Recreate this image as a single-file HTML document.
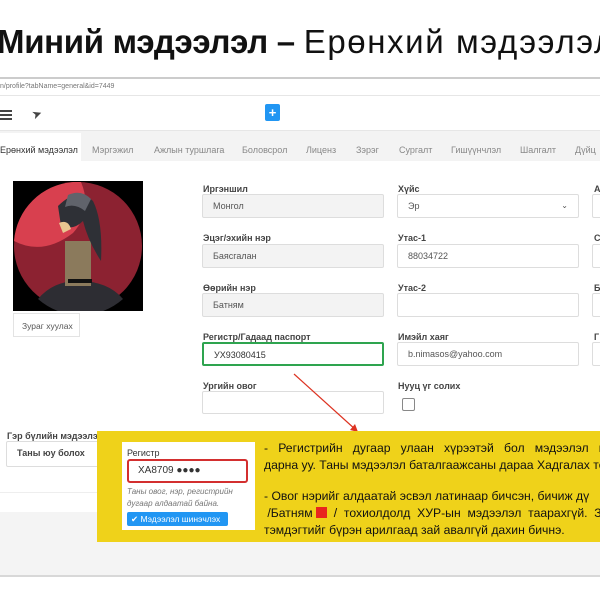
<!DOCTYPE html>
<html><head><meta charset="utf-8"><style>
*{margin:0;padding:0;box-sizing:border-box}
html,body{width:600px;height:600px;overflow:hidden}
body{background:#fff;font-family:"Liberation Sans",sans-serif;position:relative;color:#333}
.a{position:absolute;white-space:nowrap}
.lbl{position:absolute;font-size:9px;font-weight:bold;color:#444}
.in{position:absolute;height:24px;border:1px solid #ddd;border-radius:2px;font-size:9px;color:#555;padding:6px 10px;background:#fff}
.g{background:#f3f3f3}
.tab{position:absolute;top:145px;font-size:9px;color:#888}
.y{font-family:"Liberation Sans Narrow","Liberation Sans",sans-serif;font-size:12.2px;color:#111}
</style></head><body>
<div class="a" style="left:-3px;top:23px;font-size:33px;color:#111;letter-spacing:-0.3px"><b>Миний мэдээлэл –</b> <span style="font-weight:normal;letter-spacing:1.6px">Ерөнхий мэдээлэл</span></div>
<div class="a" style="left:0;top:77px;width:600px;height:2px;background:#ccc"></div>
<div class="a" style="left:0;top:83px;font-size:7px;color:#777">n/profile?tabName=general&amp;id=7449</div>
<div class="a" style="left:0;top:95px;width:600px;height:1px;background:#e6e6e6"></div>
<div class="a" style="left:0;top:110px;width:12px;height:10px;border-top:2px solid #444;border-bottom:2px solid #444"></div>
<div class="a" style="left:0;top:114px;width:12px;height:2px;background:#444"></div>
<div class="a" style="left:32px;top:107px;font-size:12px;color:#444;transform:rotate(-20deg)">➤</div>
<div class="a" style="left:265px;top:104px;width:15px;height:17px;background:#2196f3;border-radius:2px;color:#fff;font-size:13px;font-weight:bold;text-align:center;line-height:17px">+</div>
<div class="a" style="left:0;top:130px;width:600px;height:1px;background:#e6e6e6"></div>
<div class="a" style="left:0;top:131px;width:600px;height:30px;background:#f3f3f3"></div>
<div class="a" style="left:0;top:133px;width:81px;height:28px;background:#fff"></div>
<div class="tab" style="left:0;color:#333">Ерөнхий мэдээлэл</div>
<div class="tab" style="left:92px">Мэргэжил</div>
<div class="tab" style="left:154px">Ажлын туршлага</div>
<div class="tab" style="left:242px">Боловсрол</div>
<div class="tab" style="left:306px">Лиценз</div>
<div class="tab" style="left:356px">Зэрэг</div>
<div class="tab" style="left:399px">Сургалт</div>
<div class="tab" style="left:451px">Гишүүнчлэл</div>
<div class="tab" style="left:520px">Шалгалт</div>
<div class="tab" style="left:575px">Дүйц</div>
<svg class="a" style="left:13px;top:181px" width="130" height="130" viewBox="0 0 130 130">
<rect width="130" height="130" fill="#000"/>
<circle cx="65" cy="65" r="64" fill="#8c2231"/>
<path d="M1 60 A64 64 0 0 1 60 1 L68 1 Q80 30 60 52 Q30 75 1 60Z" fill="#d8404f"/>
<path d="M25 118 Q40 100 65 100 Q95 100 110 118 A64 64 0 0 1 25 118Z" fill="#2d2d33"/>
<rect x="52" y="60" width="26" height="45" fill="#8b7a5c"/>
<path d="M45 25 Q65 5 80 20 Q90 40 88 80 Q75 60 70 40 Q60 50 48 45Z" fill="#2e3036"/>
<path d="M55 14 Q68 8 78 18 L72 30 Q62 22 52 26Z" fill="#60636b"/>
<path d="M46 42 Q55 38 58 48 L50 52Z" fill="#e8c690"/>
<rect x="55" y="98" width="24" height="4" fill="#111"/>
</svg>
<div class="a" style="left:13px;top:313px;width:67px;height:24px;border:1px solid #e3e3e3;font-size:8.5px;color:#555;padding:7px 8px">Зураг хуулах</div>
<div class="lbl" style="left:203px;top:184px">Иргэншил</div>
<div class="in g" style="left:202px;top:194px;width:182px">Монгол</div>
<div class="lbl" style="left:203px;top:233px">Эцэг/эхийн нэр</div>
<div class="in g" style="left:202px;top:244px;width:182px">Баясгалан</div>
<div class="lbl" style="left:203px;top:283px">Өөрийн нэр</div>
<div class="in g" style="left:202px;top:293px;width:182px">Батням</div>
<div class="lbl" style="left:203px;top:332px">Регистр/Гадаад паспорт</div>
<div class="in" style="left:202px;top:342px;width:182px;border:2px solid #2ea44f;color:#333">УХ93080415</div>
<div class="lbl" style="left:203px;top:381px">Ургийн овог</div>
<div class="in" style="left:202px;top:391px;width:182px;height:23px"></div>
<div class="lbl" style="left:398px;top:184px">Хүйс</div>
<div class="in" style="left:397px;top:194px;width:182px">Эр<span style="position:absolute;right:10px;font-size:8px">⌄</span></div>
<div class="lbl" style="left:398px;top:233px">Утас-1</div>
<div class="in" style="left:397px;top:244px;width:182px">88034722</div>
<div class="lbl" style="left:398px;top:283px">Утас-2</div>
<div class="in" style="left:397px;top:293px;width:182px"></div>
<div class="lbl" style="left:398px;top:332px">Имэйл хаяг</div>
<div class="in" style="left:397px;top:342px;width:182px">b.nimasos@yahoo.com</div>
<div class="lbl" style="left:398px;top:381px">Нууц үг солих</div>
<div class="a" style="left:402px;top:398px;width:13px;height:13px;border:1px solid #888;border-radius:2px"></div>
<div class="lbl" style="left:594px;top:184px">А</div>
<div class="lbl" style="left:594px;top:233px">С</div>
<div class="lbl" style="left:594px;top:283px">Б</div>
<div class="lbl" style="left:594px;top:332px">Г</div>
<div class="in" style="left:592px;top:194px;width:8px"></div>
<div class="in" style="left:592px;top:244px;width:8px"></div>
<div class="in" style="left:592px;top:293px;width:8px"></div>
<div class="in" style="left:592px;top:342px;width:8px"></div>
<svg class="a" style="left:290px;top:370px" width="80" height="65"><line x1="4" y1="4" x2="66" y2="60" stroke="#d32" stroke-width="1.2"/><path d="M60 60 L68 62 L65 54Z" fill="#d32"/></svg>
<div class="lbl" style="left:7px;top:431px">Гэр бүлийн мэдээлэл</div>
<div class="in" style="left:6px;top:441px;width:100px;height:26px;font-weight:bold;color:#444">Таны юу болох</div>
<div class="a" style="left:0;top:492px;width:97px;height:1px;background:#eee"></div>
<div class="a" style="left:0;top:512px;width:600px;height:63px;background:#f4f4f4"></div>
<div class="a" style="left:0;top:575px;width:600px;height:2px;background:#d8d8d8"></div>
<div class="a" style="left:97px;top:431px;width:503px;height:111px;background:#efd21a"></div>
<div class="a" style="left:122px;top:442px;width:133px;height:88px;background:#fff"></div>
<div class="a" style="left:127px;top:448px;font-size:9px;color:#333">Регистр</div>
<div class="a" style="left:127px;top:459px;width:121px;height:24px;border:2px solid #d32f2f;border-radius:3px;font-size:10px;color:#333;padding:4px 9px">ХА8709 ●●●●</div>
<div class="a" style="left:127px;top:486px;font-size:8px;color:#777;font-style:italic;line-height:12px">Таны овог, нэр, регистрийн<br>дугаар алдаатай байна.</div>
<div class="a" style="left:127px;top:512px;width:101px;height:14px;background:#2196f3;border-radius:2px;color:#fff;font-size:8.5px;padding:2px 4px">✔ Мэдээлэл шинэчлэх</div>
<div class="a" style="left:264px;top:436px;width:336px;height:106px;overflow:hidden">
<div class="a y" style="left:0;top:4px;line-height:17px">-&nbsp;&nbsp; Регистрийн&nbsp;&nbsp; дугаар&nbsp;&nbsp; улаан&nbsp;&nbsp; хүрээтэй&nbsp;&nbsp; бол&nbsp;&nbsp; мэдээлэл&nbsp;&nbsp; ш<br>дарна уу. Таны мэдээлэл баталгаажсаны дараа Хадгалах то</div>
<div class="a y" style="left:0;top:52px;line-height:17px">- Овог нэрийг алдаатай эсвэл латинаар бичсэн, бичиж дү<br>&nbsp;/Батням <span style="display:inline-block;width:11px;height:11px;background:#e8261e;vertical-align:-1px"></span>&nbsp; /&nbsp; тохиолдолд&nbsp; ХУР-ын&nbsp; мэдээлэл&nbsp; таарахгүй.&nbsp; З<br>тэмдэгтийг бүрэн арилгаад зай авалгүй дахин бичнэ.</div>
</div>
</body></html>
